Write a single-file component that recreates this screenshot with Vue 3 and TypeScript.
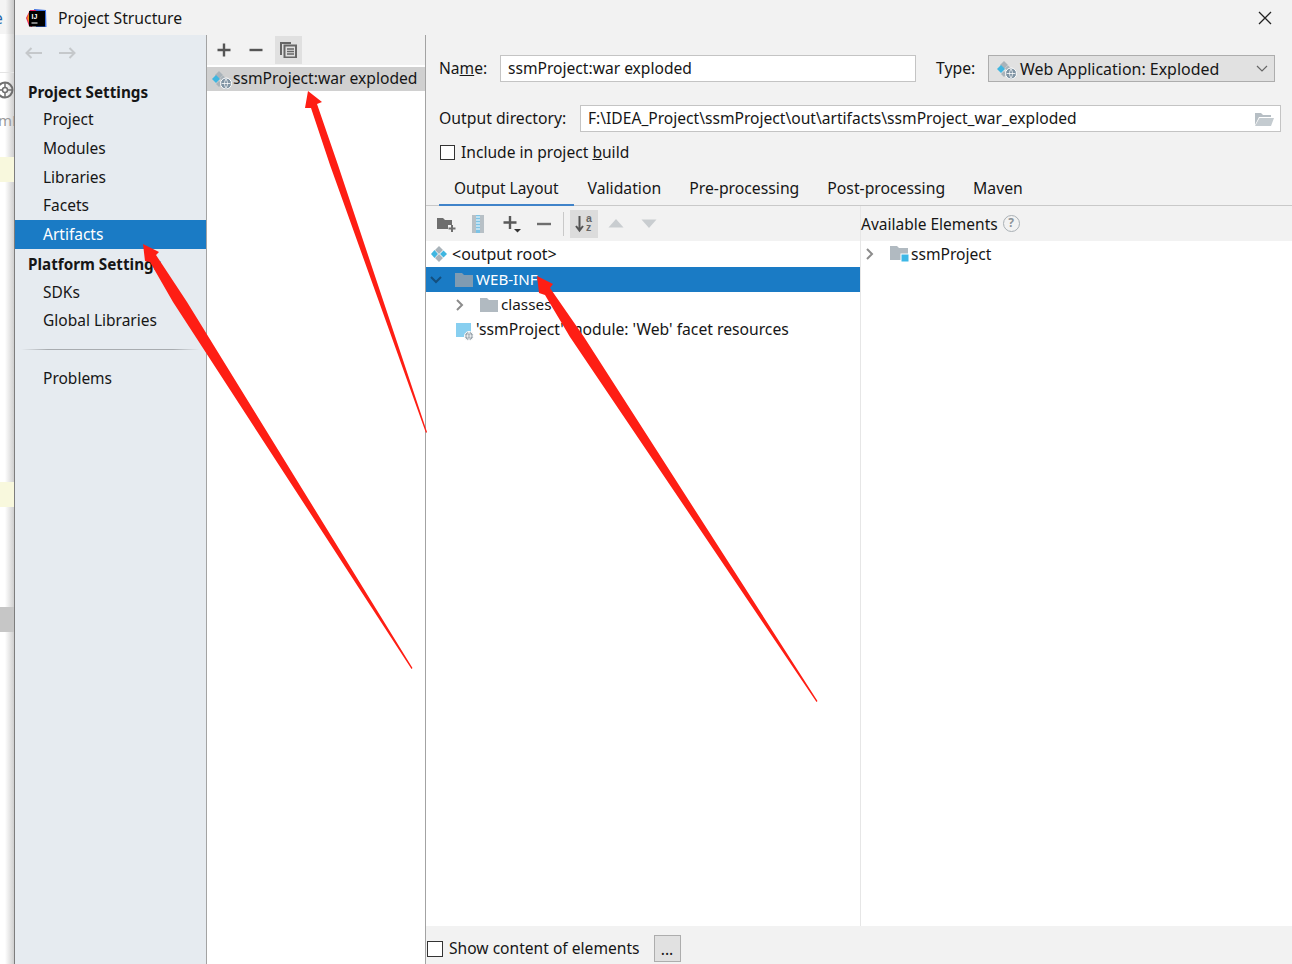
<script setup lang="ts">
const nav1 = [
  { label: 'Project' },
  { label: 'Modules' },
  { label: 'Libraries' },
  { label: 'Facets' },
  { label: 'Artifacts', active: true },
]
const nav2 = ['SDKs', 'Global Libraries']
const tabs = ['Validation', 'Pre-processing', 'Post-processing', 'Maven']
</script>

<template>
  <div class="page">
    <div class="backdrop">
      <div class="b-top"></div>
      <div class="b-line"></div>
      <div class="b-e">e</div>
      <div class="b-gear"><svg width="14" height="20" viewBox="0 0 14 20"><circle cx="5" cy="10" r="7.500" fill="none" stroke="#6f6f6f" stroke-width="2"/><circle cx="5" cy="10" r="2.500" fill="none" stroke="#6f6f6f" stroke-width="1.500"/><path d="M5 3v4M5 13v4M-2 10h4M8 10h4" stroke="#6f6f6f" stroke-width="1.500"/></svg></div>
      <div class="b-mp">mP</div>
      <div class="b-y1"></div>
      <div class="b-y2"></div>
      <div class="b-g"></div>
    </div>
    <div class="window">
      <header class="title">
        <svg class="logo" width="21" height="19" viewBox="0 0 21 19">
          <path d="M8 0L20 1L20.500 18L10 18Z" fill="#3b6fe0"/>
          <path d="M0 9L4 1L10 1L6 18L3 17Z" fill="#e5205f"/>
          <path d="M1 9L3 4V14Z" fill="#f08a20"/>
          <rect x="3" y="2" width="16" height="15.500" fill="#000"/>
          <text x="5.500" y="9.500" class="logo-t">IJ</text>
          <rect x="5.500" y="13.500" width="6" height="1" fill="#fff"/>
        </svg>
        <span>Project Structure</span>
        <svg class="close" width="14" height="14" viewBox="0 0 14 14"><path d="M1 1l12 12M13 1L1 13" stroke="#222" stroke-width="1.300"/></svg>
      </header>
      <div class="body">
        <aside class="side">
          <div class="hist">
            <svg width="18" height="12" viewBox="0 0 18 12"><path d="M1 6h16M6.500 1 1.500 6l5 5" fill="none" stroke="#c5c8cb" stroke-width="2"/></svg>
            <svg width="18" height="12" viewBox="0 0 18 12"><path d="M1 6h16M11.500 1l5 5-5 5" fill="none" stroke="#c5c8cb" stroke-width="2"/></svg>
          </div>
          <div class="group">Project Settings</div>
          <div v-for="n in nav1" :key="n.label" class="item" :class="{ on: n.active }">{{ n.label }}</div>
          <div class="group g2">Platform Settings</div>
          <div v-for="n in nav2" :key="n" class="item i2">{{ n }}</div>
          <div class="sep"></div>
          <div class="item i2">Problems</div>
        </aside>
        <section class="mid">
          <div class="mid-bar">
            <svg class="mi" width="14" height="14" viewBox="0 0 14 14"><path d="M7 .500v13M.500 7h13" stroke="#555" stroke-width="2.400"/></svg>
            <svg class="mi m2" width="14" height="14" viewBox="0 0 14 14"><path d="M.500 7h13" stroke="#555" stroke-width="2.400"/></svg>
            <span class="copy"><svg width="17" height="16" viewBox="0 0 17 16"><path d="M0 0h11v2H2v11H0Z" fill="#666"/><path d="M4.500 3.500h11.500v12H4.500z" fill="none" stroke="#666" stroke-width="2"/><path d="M7 7h7M7 9.500h7M7 12h7" stroke="#666" stroke-width="1.500"/></svg></span>
          </div>
          <div class="mid-list">
            <div class="mid-row">
              <svg class="art" width="20" height="18" viewBox="0 0 20 18"><use href="#artifact" /></svg>
              <span>ssmProject:war exploded</span>
            </div>
          </div>
        </section>
        <section class="main">
          <svg width="0" height="0" class="defs">
            <defs>
              <g id="artifact">
                <path d="M7 0l4 4-4 4-4-4z" fill="#a9b3ba"/>
                <path d="M4 4l4 4-4 4-4-4z" fill="#40b6e0"/>
                <path d="M11 4.500l3 3-3 3-3-3z" fill="#a9b3ba"/>
                <path d="M7 10l3 3-3 3-3-3z" fill="#a9b3ba"/>
                <circle cx="14" cy="12.500" r="5.500" fill="#7f93a3" stroke="#fff"/>
                <path d="M9.500 12.500h9M14 8c-2 3-2 6 0 9M14 8c2 3 2 6 0 9" stroke="#fff" stroke-width=".8" fill="none"/>
              </g>
            </defs>
          </svg>
          <div class="form">
            <div class="row r1">
              <label class="l-name">Na<u>m</u>e:</label>
              <div class="input name"><span>ssmProject:war exploded</span></div>
              <label class="l-type">Type:</label>
              <div class="combo">
                <svg class="art" width="20" height="18" viewBox="0 0 20 18"><use href="#artifact" /></svg>
                <span>Web Application: Exploded</span>
                <svg class="chev" width="12" height="8" viewBox="0 0 12 8"><path d="M1 1l5 5 5-5" fill="none" stroke="#666" stroke-width="1.200"/></svg>
              </div>
            </div>
            <div class="row r2">
              <label class="l-out">Output directory:</label>
              <div class="input out">
                <span>F:\IDEA_Project\ssmProject\out\artifacts\ssmProject_war_exploded</span>
                <svg width="19" height="14" viewBox="0 0 19 14"><path d="M0 13V1h6l2 2h8v2H4Z" fill="#b6bec4"/><path d="M4.500 6H19l-3 8H0z" fill="#c4cbd0"/></svg>
              </div>
            </div>
            <div class="row r3">
              <span class="cb"></span>
              <span>Include in project <u>b</u>uild</span>
            </div>
          </div>
          <nav class="tabs">
            <div class="tab on">Output Layout</div>
            <div v-for="t in tabs" :key="t" class="tab">{{ t }}</div>
          </nav>
          <div class="split">
            <div class="left">
              <div class="tools">
                <svg class="t t1" width="20" height="18" viewBox="0 0 20 18"><path d="M1 3h6l2 2h7v5h-4v4H1z" fill="#6e6e6e"/><path d="M16 10v7M12.500 13.500h7" stroke="#6e6e6e" stroke-width="2"/></svg>
                <svg class="t t2" width="14" height="18" viewBox="0 0 14 18"><rect x="1" y="0" width="12" height="18" fill="#b7c0c6"/><rect x="5" y="0" width="4" height="18" fill="#7cc3e6"/><path d="M5 2h4M5 5h4M5 8h4M5 11h4M5 14h4" stroke="#fff"/></svg>
                <svg class="t t3" width="20" height="20" viewBox="0 0 20 20"><path d="M8 2v13M1.500 8.500h13" stroke="#5a5a5a" stroke-width="2.400"/><path d="M12 15h7l-3.500 3.500z" fill="#333"/></svg>
                <svg class="t t4" width="14" height="14" viewBox="0 0 14 14"><path d="M0 7h14" stroke="#6e6e6e" stroke-width="2.400"/></svg>
                <span class="vsep"></span>
                <span class="sort"><svg width="18" height="18" viewBox="0 0 18 18"><path d="M4.500 1v14M1 11l3.500 4.500L8 11" fill="none" stroke="#555" stroke-width="2"/><text x="11" y="7" class="sort-t">a</text><text x="11" y="15.500" class="sort-t">z</text></svg></span>
                <svg class="t t5" width="16" height="9" viewBox="0 0 16 9"><path d="M8 0l7.500 8.500H.5z" fill="#c9cdd0"/></svg>
                <svg class="t t6" width="16" height="9" viewBox="0 0 16 9"><path d="M.5 .5h15L8 9z" fill="#c9cdd0"/></svg>
              </div>
              <div class="tree">
                <div class="node root">
                  <svg width="18" height="16" viewBox="0 0 18 16"><path d="M9 0l4 4-4 4-4-4z" fill="#a9b3ba"/><path d="M4.500 4l3.500 4-3.500 4L1 8z" fill="#40b6e0"/><path d="M13.500 4.500L17 8l-3.500 3.500L10 8z" fill="#40b6e0"/><path d="M9 8l4 4-4 4-4-4z" fill="#a9b3ba"/></svg>
                  <span>&lt;output root&gt;</span>
                </div>
                <div class="node sel">
                  <svg class="arrow" width="12" height="8" viewBox="0 0 12 8"><path d="M1 1l5 5 5-5" fill="none" stroke="#144f7e" stroke-width="2"/></svg>
                  <svg class="folder" width="18" height="14" viewBox="0 0 18 14"><path d="M0 0h7l2 2h9v12H0z" fill="#7f9bb2"/></svg>
                  <span>WEB-INF</span>
                </div>
                <div class="node classes">
                  <svg class="arrow" width="8" height="12" viewBox="0 0 8 12"><path d="M1 1l5 5-5 5" fill="none" stroke="#8c8c8c" stroke-width="2"/></svg>
                  <svg class="folder" width="18" height="14" viewBox="0 0 18 14"><path d="M0 0h7l2 2h9v12H0z" fill="#b1bac1"/></svg>
                  <span>classes</span>
                </div>
                <div class="node web">
                  <svg class="art2" width="18" height="18" viewBox="0 0 18 18"><rect x="0" y="0" width="15" height="14" fill="#88cff0"/><circle cx="13" cy="13" r="4.500" fill="#9ba6ae" stroke="#fff"/><path d="M9 13h8M13 9c-2 3-2 5 0 8M13 9c2 3 2 5 0 8" stroke="#fff" stroke-width=".7" fill="none"/></svg>
                  <span>'ssmProject' module: 'Web' facet resources</span>
                </div>
              </div>
            </div>
            <div class="right">
              <div class="avail">
                <span>Available Elements</span>
                <span class="help">?</span>
              </div>
              <div class="tree">
                <div class="node proj">
                  <svg class="arrow" width="8" height="12" viewBox="0 0 8 12"><path d="M1 1l5 5-5 5" fill="none" stroke="#8c8c8c" stroke-width="2"/></svg>
                  <svg class="folder" width="20" height="18" viewBox="0 0 20 18"><path d="M0 1h7l2 2h9v12H0z" fill="#b1bac1"/><rect x="11" y="9" width="8" height="8" fill="#3db7e6" stroke="#fff"/></svg>
                  <span>ssmProject</span>
                </div>
              </div>
            </div>
          </div>
          <footer class="foot">
            <span class="cb c2"></span>
            <span class="foot-label">Show content of elements</span>
            <span class="dots">...</span>
          </footer>
        </section>
      </div>
    </div>
    <svg class="marks" width="1292" height="964" viewBox="0 0 1292 964">
      <path d="M308 91 L322 102 L317 104 L338 165 L427 432 L426 433 L330 165 L311 108 L305 108Z" fill="#fe1e14"/>
      <path d="M143 244 L159 252 L156 255 L187 302 L412.500 668 L411.500 669 L173 302 L150 262 L145 261Z" fill="#fe1e14"/>
      <path d="M537 276 L553 284 L550 288 L584 337 L817.500 701 L816.500 702 L570 337 L545 295 L539 293Z" fill="#fe1e14"/>
    </svg>
  </div>
</template>

<style>
html, body { margin: 0; background: #fff; }
</style>

<style scoped>
.page {
  position: relative;
  width: 1292px;
  height: 964px;
  overflow: hidden;
  display: flex;
  font-family: "Noto Sans", "Open Sans", sans-serif;
  font-size: 15.6px;
  color: #161616;
  background: #fff;
}
.backdrop {
  position: relative;
  width: 14px;
  flex: none;
  overflow: hidden;
  background: linear-gradient(90deg, #fff 0%, #fff 35%, #cfcfcf 100%);
}
.b-top { position: absolute; left: 0; top: 0; width: 14px; height: 34px; background: linear-gradient(90deg, #f4f4f4, #f4f4f4 40%, #c9c9c9); }
.b-line { position: absolute; left: 0; top: 72px; width: 14px; height: 1px; background: #e4e4e4; }
.b-e { position: absolute; left: -6px; top: 7px; color: #2266aa; }
.b-gear { position: absolute; left: 0; top: 80px; }
.b-mp { position: absolute; left: -2px; top: 110px; font-size: 15px; color: #9a9a9a; }
.b-y1 { position: absolute; left: 0; top: 157px; width: 14px; height: 25px; background: #f8f8dd; }
.b-y2 { position: absolute; left: 0; top: 482px; width: 14px; height: 25px; background: #f8f8dd; }
.b-g { position: absolute; left: 0; top: 607px; width: 14px; height: 25px; background: #c6c6c6; }
.window {
  width: 1278px;
  flex: none;
  border-left: 1px solid #7d7d7d;
  display: flex;
  flex-direction: column;
  background: #f2f2f2;
  height: 964px;
  box-sizing: border-box;
}
.title {
  height: 35px;
  flex: none;
  display: flex;
  align-items: center;
  background: #f2f2f2;
  box-sizing: border-box;
  padding: 1px 20px 0 11px;
  font-size: 15.75px;
}
.title span { margin-left: 11px; }
.logo { flex: none; }
.logo-t { font: bold 7px "Liberation Sans", sans-serif; fill: #fff; }
.close { margin-left: auto; }
.body { flex: 1; display: flex; min-height: 0; }
.side {
  width: 191px;
  flex: none;
  background: #e6ebf0;
  border-right: 1px solid #a3a3a3;
  display: flex;
  flex-direction: column;
  font-size: 15.5px;
}
.hist { height: 36px; display: flex; align-items: center; gap: 15px; padding-left: 10px; margin-bottom: 8px; }
.group { font-weight: 700; font-size: 15.250px; height: 26px; line-height: 26px; padding-left: 13px; white-space: nowrap; overflow: hidden; }
.group.g2 { height: 28px; line-height: 30px; }
.item { height: 28.750px; line-height: 28.750px; padding-left: 28px; }
.item.i2 { height: 28.400px; line-height: 30px; }
.item.on { background: #1a7bc5; color: #fff; }
.sep {
  height: 1px;
  margin: 15px 6px 13px 6px;
  background: linear-gradient(90deg, #e6ebf0, #a8acb0 15%, #a8acb0 85%, #e6ebf0);
}
.mid {
  width: 218px;
  flex: none;
  background: #fff;
  border-right: 1px solid #a3a3a3;
  display: flex;
  flex-direction: column;
}
.mid-bar { height: 30px; background: #f2f2f2; display: flex; align-items: center; padding-left: 10px; box-sizing: border-box; flex: none; }
.mi { margin-right: 18px; }
.mi.m2 { margin-right: 12px; }
.copy { width: 27px; height: 28px; background: #e0e0e0; display: flex; align-items: center; justify-content: center; }
.mid-list { background: #fff; padding-top: 2px; }
.mid-row { height: 24px; box-sizing: border-box; padding: 0 0 2px 5px; background: #d0d0d0; display: flex; align-items: center; white-space: nowrap; font-size: 15.650px; }
.art { margin-right: 1px; margin-top: 3px; flex: none; }
.main { flex: 1; min-width: 0; display: flex; flex-direction: column; position: relative; }
.defs { position: absolute; }
.form { padding: 0 0 0 13px; flex: none; }
.row { display: flex; align-items: center; white-space: nowrap; }
.r1 { height: 27px; margin-top: 20px; }
.r1 label { padding-bottom: 2px; }
.input { background: #fff; border: 1px solid #c4c4c4; height: 27px; box-sizing: border-box; padding: 0 7px; display: flex; align-items: center; }
.name span { padding-bottom: 2px; }
.out span { padding-bottom: 2px; }
.l-name { width: 61px; flex: none; }
.name { width: 416px; flex: none; }
.l-type { margin-left: 20px; width: 52px; flex: none; font-size: 15.750px; }
.combo {
  width: 287px;
  height: 27px;
  flex: none;
  box-sizing: border-box;
  border: 1px solid #adadad;
  background: #e1e1e1;
  display: flex;
  align-items: center;
  padding: 0 6px 0 8px;
  font-size: 15.950px;
}
.combo .art { margin-right: 0; }
.combo span { margin-left: 3px; }
.chev { margin-left: auto; }
.r2 { height: 27px; margin-top: 23px; }
.l-out { width: 141px; flex: none; font-size: 15.750px; padding-bottom: 2px; }
.out { width: 701px; flex: none; justify-content: space-between; padding-right: 6px; }
.r3 { height: 28px; margin-top: 6px; padding-left: 1px; }
.cb { width: 15px; height: 15px; box-sizing: border-box; border: 1.500px solid #333; background: #fff; margin-right: 6px; flex: none; }
.tabs { display: flex; height: 33px; flex: none; margin-top: 7px; border-bottom: 1px solid #c9c9c9; box-sizing: border-box; padding-left: 13px; font-size: 15.750px; }
.tab { height: 33px; box-sizing: border-box; line-height: 30px; padding: 0 14px; white-space: nowrap; }
.tab.on { border-bottom: 2px solid #4083c9; padding: 0 15px; font-size: 15.400px; line-height: 31px; }
.split { flex: 1; min-height: 0; display: flex; }
.left { width: 434px; flex: none; display: flex; flex-direction: column; background: #fff; }
.tools { height: 35px; background: #f2f2f2; display: flex; align-items: center; flex: none; position: relative; }
.t { flex: none; }
.t1 { margin-left: 10px; }
.t2 { margin-left: 15px; }
.t3 { margin-left: 17px; }
.t4 { margin-left: 15px; }
.vsep { width: 1px; height: 24px; background: #c9c9c9; margin-left: 12px; }
.sort { width: 28px; height: 28px; background: #dcdcdc; display: flex; align-items: center; justify-content: center; margin-left: 6px; }
.sort svg { overflow: visible; }
.sort-t { font: 700 10.500px "Liberation Sans", sans-serif; fill: #666; }
.t5 { margin-left: 10px; }
.t6 { margin-left: 17px; }
.tree { flex: 1; background: #fff; }
.node { height: 25px; display: flex; align-items: center; white-space: nowrap; }
.root { padding-left: 4px; height: 26px; font-size: 16px; }
.root span { margin-left: 4px; }
.sel { background: #1a7bc5; color: #fff; padding-left: 4px; font-size: 15.100px; }
.sel span { padding-bottom: 2px; }
.sel .arrow { margin-right: 13px; }
.sel .folder { margin-right: 3px; }
.classes { padding-left: 30px; font-size: 15.300px; }
.classes span { padding-bottom: 2px; }
.classes .arrow { margin-right: 16px; }
.classes .folder { margin-right: 3px; }
.web { padding-left: 30px; font-size: 15.700px; }
.web span { margin-left: 2px; padding-bottom: 2px; }
.art2 { margin-top: 4px; flex: none; }
.right { flex: 1; min-width: 0; display: flex; flex-direction: column; border-left: 1px solid #e6e6e6; background: #fff; }
.avail { height: 35px; background: #f2f2f2; display: flex; align-items: center; flex: none; font-size: 15.500px; }
.help {
  width: 17px;
  height: 17px;
  box-sizing: border-box;
  border: 1.500px solid #a9b0b5;
  border-radius: 50%;
  margin-left: 5px;
  font-size: 12px;
  line-height: 14px;
  text-align: center;
  font-weight: 700;
  color: #8d9499;
}
.proj { padding-left: 5px; height: 26px; }
.proj .arrow { margin-right: 16px; }
.proj span { margin-left: 1px; }
.foot {
  position: absolute;
  left: 0;
  right: 0;
  bottom: 0;
  height: 38px;
  box-sizing: border-box;
  display: flex;
  align-items: center;
  background: #f2f2f2;
  padding: 7px 0 0 1px;
}
.foot-label { padding-bottom: 2px; }
.c2 { width: 16px; height: 16px; margin-right: 6px; }
.dots {
  width: 27px;
  height: 27px;
  box-sizing: border-box;
  border: 1px solid #adadad;
  background: #e1e1e1;
  margin-left: 14px;
  text-align: center;
  line-height: 26px;
}
.marks { position: absolute; left: 0; top: 0; pointer-events: none; }
</style>
